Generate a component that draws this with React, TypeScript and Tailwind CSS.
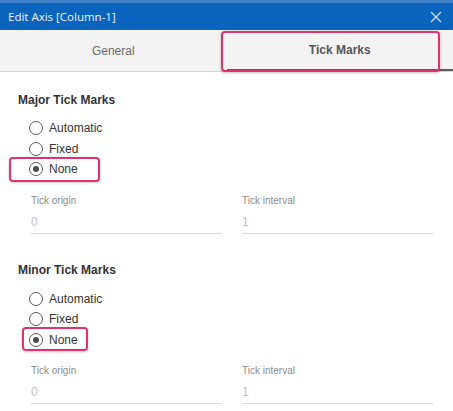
import React from "react";

type Option = { label: string; checked?: boolean };

const options: Option[] = [
  { label: "Automatic" },
  { label: "Fixed" },
  { label: "None", checked: true },
];

function Radio({ label, checked }: Option) {
  return (
    <div className="flex items-center h-[20.5px] pl-[11px]">
      <span className="w-[14px] h-[14px] rounded-full border border-[#5a5a5a] bg-white flex items-center justify-center">
        {checked && <span className="w-[6px] h-[6px] rounded-full bg-[#4a4a4a]" />}
      </span>
      <span className="ml-[6px] text-[12px] text-[#333]">{label}</span>
    </div>
  );
}

function Field({ label, value }: { label: string; value: string }) {
  return (
    <div className="flex-1">
      <div className="h-[16px] leading-[16px] text-[10px] text-[#8c8c8c]">{label}</div>
      <div className="mt-[3px] h-[22px] border-b border-[#dcdcdc] text-[12px] leading-[20px] text-[#c2c2c2]">
        {value}
      </div>
    </div>
  );
}

function Section({ title, mt, gap }: { title: string; mt: string; gap: string }) {
  return (
    <section className={mt}>
      <h2 className="h-[20px] leading-[20px] text-[12px] font-bold text-[#333]">{title}</h2>
      <div className={gap}>
        {options.map((o) => (
          <Radio key={o.label} {...o} />
        ))}
      </div>
      <div className="flex gap-[20px] pl-[13px] pr-[2px] mt-[13px]">
        <Field label="Tick origin" value="0" />
        <Field label="Tick interval" value="1" />
      </div>
    </section>
  );
}

export default function App() {
  return (
    <div
      className="relative w-[453px] h-[411px] overflow-hidden bg-white"
      style={{ fontFamily: '"Liberation Sans", Arial, sans-serif' }}
    >
      {/* title bar */}
      <div className="h-[3px] bg-[#3f80c6]" />
      <div className="h-[27px] bg-[#0a64bd] flex items-center justify-between pl-[8px] pr-[11px]">
        <span
          className="text-[11.5px] text-[#eef4fb]"
          style={{ fontFamily: '"Open Sans", "Noto Sans", sans-serif' }}
        >
          Edit Axis [Column-1]
        </span>
        <svg width="12" height="12" viewBox="0 0 12 12" className="text-[#d6e5f6]">
          <path d="M1 1 L11 11 M11 1 L1 11" stroke="currentColor" strokeWidth="1.2" fill="none" />
        </svg>
      </div>

      {/* tabs */}
      <div className="h-[42px] bg-[#f3f3f3] flex border-b border-[#d4d4d4]">
        <div className="flex-1 flex items-center justify-center text-[12px] text-[#6a6a6a]">General</div>
        <div className="flex-1 flex items-center justify-center text-[12px] font-bold text-[#555] border-b-2 border-[#5c5c5c]">
          Tick Marks
        </div>
      </div>

      {/* body */}
      <div className="px-[18px]">
        <Section title="Major Tick Marks" mt="mt-[18px]" gap="mt-[8px]" />
        <Section title="Minor Tick Marks" mt="mt-[26px]" gap="mt-[9px]" />
      </div>

      {/* highlight overlays */}
      <div className="absolute left-[221px] top-[31px] w-[219px] h-[41px] rounded-[4px] border-2 border-[#e0336c] shadow-[0_1px_3px_rgba(0,0,0,0.25)]" />
      <div className="absolute left-[9px] top-[157px] w-[91px] h-[25px] rounded-[4px] border-2 border-[#e0336c] shadow-[0_1px_3px_rgba(0,0,0,0.2)]" />
      <div className="absolute left-[22px] top-[327px] w-[66px] h-[24px] rounded-[4px] border-2 border-[#e0336c] shadow-[0_1px_3px_rgba(0,0,0,0.2)]" />
    </div>
  );
}
